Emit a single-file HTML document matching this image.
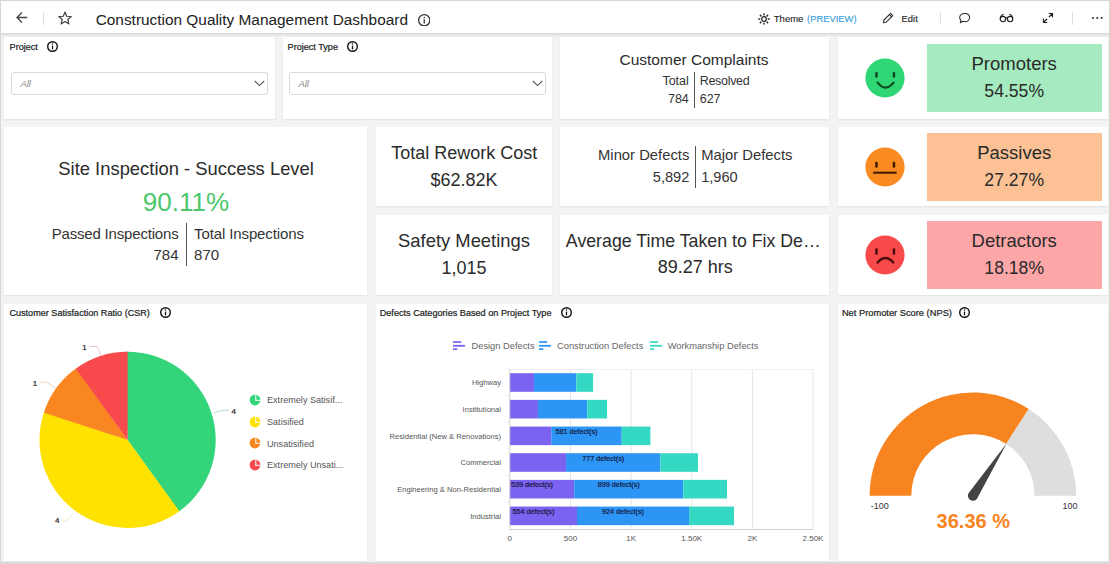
<!DOCTYPE html>
<html><head><meta charset="utf-8"><style>
html,body{margin:0;padding:0;}
body{width:1110px;height:564px;overflow:hidden;position:relative;background:#f3f3f3;font-family:"Liberation Sans",sans-serif;}
.a{position:absolute;}
.t{position:absolute;white-space:nowrap;line-height:1;}
.card{position:absolute;background:#fff;box-shadow:0 1px 1.5px rgba(0,0,0,0.07);}
.frame{position:absolute;left:0;top:0;width:1110px;height:564px;box-sizing:border-box;border-left:1.5px solid #d8d8d8;border-right:1.5px solid #d8d8d8;border-bottom:2px solid #d8d8d8;pointer-events:none;}
</style></head><body>
<div class="a" style="left:0;top:0;width:1110px;height:34px;background:#fff;border-top:1px solid #d6d6d6;border-bottom:1px solid #dadada;box-sizing:border-box;box-shadow:0 1px 3px rgba(0,0,0,0.10)"></div>
<svg class="a" style="left:15px;top:11px" width="14" height="13" viewBox="0 0 14 13"><path d="M2 6.5H12.2M7 1.5L2 6.5L7 11.5" fill="none" stroke="#444" stroke-width="1.3"/></svg>
<div class="a" style="left:43px;top:12px;width:1px;height:13px;background:#dcdcdc"></div>
<svg class="a" style="left:56px;top:10px" width="18" height="17" viewBox="0 0 18 17"><polygon points="9.00,2.00 10.70,6.25 15.28,6.56 11.76,9.50 12.88,13.94 9.00,11.50 5.12,13.94 6.24,9.50 2.72,6.56 7.30,6.25" fill="none" stroke="#444" stroke-width="1.2" stroke-linejoin="round"/></svg>
<div class="t" style="top:11.56px;left:95.70px;font-size:15.4px;color:#222;">Construction Quality Management Dashboard</div>
<svg class="a" style="left:417.55px;top:13.55px" width="12.5" height="12.5" viewBox="0 0 12.5 12.5"><circle cx="6.25" cy="6.25" r="5.60" fill="none" stroke="#333" stroke-width="1.3"/><rect x="5.60" y="5.25" width="1.3" height="4.25" fill="#333"/><circle cx="6.25" cy="3.50" r="0.75" fill="#333"/></svg>
<svg class="a" style="left:758.4px;top:13.3px" width="12" height="12" viewBox="0 0 12 12"><circle cx="6" cy="6" r="2.3" fill="none" stroke="#222" stroke-width="1.2"/><line x1="10.30" y1="6.00" x2="11.10" y2="6.00" stroke="#222" stroke-width="1.5" stroke-linecap="round"/><line x1="9.04" y1="9.04" x2="9.61" y2="9.61" stroke="#222" stroke-width="1.5" stroke-linecap="round"/><line x1="6.00" y1="10.30" x2="6.00" y2="11.10" stroke="#222" stroke-width="1.5" stroke-linecap="round"/><line x1="2.96" y1="9.04" x2="2.39" y2="9.61" stroke="#222" stroke-width="1.5" stroke-linecap="round"/><line x1="1.70" y1="6.00" x2="0.90" y2="6.00" stroke="#222" stroke-width="1.5" stroke-linecap="round"/><line x1="2.96" y1="2.96" x2="2.39" y2="2.39" stroke="#222" stroke-width="1.5" stroke-linecap="round"/><line x1="6.00" y1="1.70" x2="6.00" y2="0.90" stroke="#222" stroke-width="1.5" stroke-linecap="round"/><line x1="9.04" y1="2.96" x2="9.61" y2="2.39" stroke="#222" stroke-width="1.5" stroke-linecap="round"/></svg>
<div class="t" style="top:13.96px;left:773.80px;font-size:9.5px;color:#1a1a1a;-webkit-text-stroke:0.1px #1a1a1a;">Theme</div>
<div class="t" style="top:14.04px;left:807.10px;font-size:9.4px;color:#3aa0dc;-webkit-text-stroke:0.15px #3aa0dc;">(PREVIEW)</div>
<svg class="a" style="left:882px;top:12px" width="13" height="12" viewBox="0 0 13 12"><path d="M1.5 10.6L2 8L8.6 1.4L10.8 3.6L4.2 10.2Z M7.4 2.6L9.6 4.8" fill="none" stroke="#333" stroke-width="1.1" stroke-linejoin="round"/></svg>
<div class="t" style="top:14.04px;left:901.60px;font-size:9.4px;color:#1a1a1a;-webkit-text-stroke:0.1px #1a1a1a;">Edit</div>
<div class="a" style="left:940px;top:12px;width:1px;height:13px;background:#e0e0e0"></div>
<svg class="a" style="left:957.6px;top:11.6px" width="13.2" height="12.3" viewBox="0 0 15 14"><path d="M2.6 12.2L3.3 9.6C2.4 8.7 1.9 7.6 1.9 6.4C1.9 3.6 4.4 1.6 7.6 1.6C10.8 1.6 13.2 3.6 13.2 6.4C13.2 9.1 10.8 11.1 7.6 11.1C6.7 11.1 5.9 11 5.1 10.6Z" fill="none" stroke="#222" stroke-width="1.15" stroke-linejoin="round"/></svg>
<svg class="a" style="left:999px;top:12px" width="15" height="11" viewBox="0 0 15 11"><circle cx="3.9" cy="7" r="2.7" fill="none" stroke="#222" stroke-width="1.15"/><circle cx="11.1" cy="7" r="2.7" fill="none" stroke="#222" stroke-width="1.15"/><path d="M6.4 6.2Q7.5 5.4 8.6 6.2M1.3 6.4Q1.6 3.2 4.6 2.2M13.7 6.4Q13.4 3.2 10.4 2.2" fill="none" stroke="#222" stroke-width="1.15"/></svg>
<svg class="a" style="left:1042px;top:12px" width="12" height="12" viewBox="0 0 12 12"><path d="M1.5 10.5L5 7M7 5L10.5 1.5M6.8 1.5H10.5V5.2M1.5 6.8V10.5H5.2" fill="none" stroke="#222" stroke-width="1.2"/></svg>
<div class="a" style="left:1072px;top:12px;width:1px;height:13px;background:#e0e0e0"></div>
<svg class="a" style="left:1091px;top:16px" width="13" height="4" viewBox="0 0 13 4"><circle cx="2" cy="2" r="1.1" fill="#333"/><circle cx="6.3" cy="2" r="1.1" fill="#333"/><circle cx="10.6" cy="2" r="1.1" fill="#333"/></svg>
<div class="card" style="left:4px;top:37px;width:271px;height:82px"></div>
<div class="card" style="left:283px;top:37px;width:269px;height:82px"></div>
<div class="card" style="left:560px;top:37px;width:269px;height:82px"></div>
<div class="card" style="left:838px;top:37px;width:270px;height:82px"></div>
<div class="card" style="left:4px;top:127px;width:363px;height:168px"></div>
<div class="card" style="left:376px;top:127px;width:176px;height:79px"></div>
<div class="card" style="left:560px;top:127px;width:269px;height:79px"></div>
<div class="card" style="left:838px;top:127px;width:270px;height:79px"></div>
<div class="card" style="left:376px;top:215px;width:176px;height:80px"></div>
<div class="card" style="left:560px;top:215px;width:269px;height:80px"></div>
<div class="card" style="left:838px;top:215px;width:270px;height:80px"></div>
<div class="card" style="left:4px;top:304px;width:363px;height:257px"></div>
<div class="card" style="left:376px;top:304px;width:453px;height:257px"></div>
<div class="card" style="left:838px;top:304px;width:270px;height:257px"></div>
<div class="t" style="top:43.00px;left:9.60px;font-size:9.1px;color:#222;-webkit-text-stroke:0.22px #222;">Project</div>
<svg class="a" style="left:47.30px;top:41.40px" width="11" height="11" viewBox="0 0 11 11"><circle cx="5.5" cy="5.5" r="4.80" fill="none" stroke="#111" stroke-width="1.4"/><rect x="4.85" y="4.62" width="1.3" height="3.74" fill="#111"/><circle cx="5.5" cy="3.08" r="0.75" fill="#111"/></svg>
<div class="a" style="left:11px;top:72.4px;width:257px;height:23px;border:1px solid #d9d9d9;border-radius:3px;box-sizing:border-box;background:#fff"></div>
<div class="t" style="top:78.86px;left:20.40px;font-size:9.5px;color:#8a8a8a;font-style:italic;">All</div>
<svg class="a" style="left:253.5px;top:80px" width="11" height="7" viewBox="0 0 11 7"><path d="M0.8 1L5.5 5.6L10.2 1" fill="none" stroke="#555" stroke-width="1.05"/></svg>
<div class="t" style="top:43.00px;left:287.60px;font-size:9.1px;color:#222;-webkit-text-stroke:0.22px #222;">Project Type</div>
<svg class="a" style="left:346.50px;top:41.40px" width="11" height="11" viewBox="0 0 11 11"><circle cx="5.5" cy="5.5" r="4.80" fill="none" stroke="#111" stroke-width="1.4"/><rect x="4.85" y="4.62" width="1.3" height="3.74" fill="#111"/><circle cx="5.5" cy="3.08" r="0.75" fill="#111"/></svg>
<div class="a" style="left:289px;top:72.4px;width:257px;height:23px;border:1px solid #d9d9d9;border-radius:3px;box-sizing:border-box;background:#fff"></div>
<div class="t" style="top:78.86px;left:298.40px;font-size:9.5px;color:#8a8a8a;font-style:italic;">All</div>
<svg class="a" style="left:531.5px;top:80px" width="11" height="7" viewBox="0 0 11 7"><path d="M0.8 1L5.5 5.6L10.2 1" fill="none" stroke="#555" stroke-width="1.05"/></svg>
<div class="t" style="top:51.68px;left:694.00px;transform:translateX(-50%);font-size:15.5px;color:#2b2b2b;">Customer Complaints</div>
<div class="t" style="top:75.02px;right:421.20px;font-size:12.5px;color:#333;">Total</div>
<div class="t" style="top:75.02px;left:699.70px;font-size:12.5px;color:#333;letter-spacing:-0.3px;">Resolved</div>
<div class="t" style="top:93.02px;right:421.20px;font-size:12.5px;color:#333;">784</div>
<div class="t" style="top:93.02px;left:699.70px;font-size:12.5px;color:#333;">627</div>
<div class="a" style="left:694px;top:72.2px;width:1px;height:35.5px;background:#555"></div>
<div class="t" style="top:159.52px;left:186.10px;transform:translateX(-50%);font-size:18.4px;color:#2b2b2b;">Site Inspection - Success Level</div>
<div class="t" style="top:189.29px;left:185.90px;transform:translateX(-50%);font-size:26px;color:#4bc76c;">90.11%</div>
<div class="t" style="top:226.10px;right:931.50px;font-size:15px;color:#333;letter-spacing:-0.18px;">Passed Inspections</div>
<div class="t" style="top:226.10px;left:194.10px;font-size:15px;color:#333;letter-spacing:-0.12px;">Total Inspections</div>
<div class="t" style="top:247.00px;right:931.50px;font-size:15px;color:#333;">784</div>
<div class="t" style="top:247.00px;left:194.10px;font-size:15px;color:#333;">870</div>
<div class="a" style="left:186px;top:223px;width:1px;height:43px;background:#555"></div>
<div class="t" style="top:143.76px;left:464.30px;transform:translateX(-50%);font-size:18px;color:#2b2b2b;">Total Rework Cost</div>
<div class="t" style="top:170.76px;left:464.00px;transform:translateX(-50%);font-size:18px;color:#2b2b2b;">$62.82K</div>
<div class="t" style="top:231.72px;left:464.00px;transform:translateX(-50%);font-size:18.4px;color:#2b2b2b;">Safety Meetings</div>
<div class="t" style="top:258.96px;left:464.00px;transform:translateX(-50%);font-size:18px;color:#2b2b2b;">1,015</div>
<div class="t" style="top:147.87px;right:420.70px;font-size:14.8px;color:#333;">Minor Defects</div>
<div class="t" style="top:147.87px;left:701.20px;font-size:14.8px;color:#333;">Major Defects</div>
<div class="t" style="top:169.74px;right:420.70px;font-size:14.6px;color:#333;">5,892</div>
<div class="t" style="top:169.74px;left:701.20px;font-size:14.6px;color:#333;">1,960</div>
<div class="a" style="left:695px;top:145.6px;width:1px;height:42px;background:#555"></div>
<div class="t" style="top:232.97px;left:693.30px;transform:translateX(-50%);font-size:17.75px;color:#2b2b2b;">Average Time Taken to Fix De…</div>
<div class="t" style="top:257.86px;left:695.30px;transform:translateX(-50%);font-size:18px;color:#2b2b2b;">89.27 hrs</div>
<div class="a" style="left:927px;top:44px;width:175.4px;height:68.2px;background:#a6ebbf"></div>
<div class="t" style="top:55.14px;left:1014.20px;transform:translateX(-50%);font-size:18.5px;color:#2a2a2a;">Promoters</div>
<div class="t" style="top:83.00px;left:1014.20px;transform:translateX(-50%);font-size:17.6px;color:#2a2a2a;">54.55%</div>
<svg class="a" style="left:865px;top:58.40px" width="40" height="40" viewBox="0 0 40 40"><circle cx="20" cy="20" r="19.6" fill="#2ed674"/><rect x="10.2" y="13.8" width="2.5" height="6" rx="1.2" fill="#0d4a22"/><rect x="27.7" y="13.8" width="2.5" height="6" rx="1.2" fill="#0d4a22"/><path d="M12.7 24.6Q20.5 34.6 28.5 24.6" fill="none" stroke="#0d4a22" stroke-width="2.3" stroke-linecap="round"/></svg>
<div class="a" style="left:927px;top:132.8px;width:175.4px;height:68.0px;background:#fcc296"></div>
<div class="t" style="top:144.14px;left:1014.20px;transform:translateX(-50%);font-size:18.5px;color:#2a2a2a;">Passives</div>
<div class="t" style="top:171.90px;left:1014.20px;transform:translateX(-50%);font-size:17.6px;color:#2a2a2a;">27.27%</div>
<svg class="a" style="left:865px;top:147.10px" width="40" height="40" viewBox="0 0 40 40"><circle cx="20" cy="20" r="19.6" fill="#fa8a22"/><rect x="10.2" y="14.8" width="2.5" height="6" rx="1.2" fill="#3d1a00"/><rect x="27.7" y="14.8" width="2.5" height="6" rx="1.2" fill="#3d1a00"/><path d="M8.2 25.7H31.6" fill="none" stroke="#3d1a00" stroke-width="2"/></svg>
<div class="a" style="left:927px;top:220.5px;width:175.4px;height:68.7px;background:#fca6a8"></div>
<div class="t" style="top:232.14px;left:1014.20px;transform:translateX(-50%);font-size:18.5px;color:#2a2a2a;">Detractors</div>
<div class="t" style="top:259.70px;left:1014.20px;transform:translateX(-50%);font-size:17.6px;color:#2a2a2a;">18.18%</div>
<svg class="a" style="left:865px;top:235.15px" width="40" height="40" viewBox="0 0 40 40"><circle cx="20" cy="20" r="19.6" fill="#f84a4b"/><rect x="10.2" y="13.2" width="2.5" height="6.6" rx="1.2" fill="#4a0c0c"/><rect x="27.7" y="13.2" width="2.5" height="6.6" rx="1.2" fill="#4a0c0c"/><path d="M12.6 27.6Q20.4 18.4 28.3 27.6" fill="none" stroke="#4a0c0c" stroke-width="2.3" stroke-linecap="round"/></svg>
<div class="t" style="top:308.80px;left:9.40px;font-size:9.1px;color:#222;-webkit-text-stroke:0.22px #222;">Customer Satisfaction Ratio (CSR)</div>
<svg class="a" style="left:159.90px;top:306.80px" width="11" height="11" viewBox="0 0 11 11"><circle cx="5.5" cy="5.5" r="4.80" fill="none" stroke="#111" stroke-width="1.4"/><rect x="4.85" y="4.62" width="1.3" height="3.74" fill="#111"/><circle cx="5.5" cy="3.08" r="0.75" fill="#111"/></svg>
<svg class="a" style="left:0;top:0" width="1110" height="564" viewBox="0 0 1110 564"><path d="M127.6,439.9 L124.53,351.85 A88.1,88.1 0 0 1 179.01,511.44 Z" fill="#34d57a"/><path d="M127.6,439.9 L179.38,511.17 A88.1,88.1 0 0 1 43.96,412.24 Z" fill="#ffe200"/><path d="M127.6,439.9 L43.81,412.68 A88.1,88.1 0 0 1 76.19,368.36 Z" fill="#f98620"/><path d="M127.6,439.9 L75.82,368.63 A88.1,88.1 0 0 1 127.60,351.80 Z" fill="#f84a4d"/><polyline points="213.8,413 221.5,410.4 229,410.4" fill="none" stroke="#9fd8c4" stroke-width="0.8"/><polyline points="89.5,346.5 97,346.5 101,355.5" fill="none" stroke="#ecb4b4" stroke-width="0.8"/><polyline points="38.8,382.2 46.9,382.2 56,388.3" fill="none" stroke="#ecc6b0" stroke-width="0.8"/><polyline points="61,520.2 67,520.2 72.5,513.5" fill="none" stroke="#efe6b8" stroke-width="0.8"/></svg>
<div class="t" style="top:343.83px;left:84.50px;transform:translateX(-50%);font-size:8px;color:#222;-webkit-text-stroke:0.22px #222;">1</div>
<div class="t" style="top:380.03px;left:35.00px;transform:translateX(-50%);font-size:8px;color:#222;-webkit-text-stroke:0.22px #222;">1</div>
<div class="t" style="top:407.63px;left:233.80px;transform:translateX(-50%);font-size:8px;color:#222;-webkit-text-stroke:0.22px #222;">4</div>
<div class="t" style="top:517.23px;left:57.20px;transform:translateX(-50%);font-size:8px;color:#222;-webkit-text-stroke:0.22px #222;">4</div>
<svg class="a" style="left:248.6px;top:394.10px" width="12" height="12" viewBox="0 0 12 12"><circle cx="6" cy="6" r="5.4" fill="#34d57a"/><path d="M6.8 6.3V0M6.3 6.3H12" stroke="#fff" stroke-width="1"/></svg>
<div class="t" style="top:396.30px;left:267.00px;font-size:9.1px;color:#555;">Extremely Satisif...</div>
<svg class="a" style="left:248.6px;top:415.90px" width="12" height="12" viewBox="0 0 12 12"><circle cx="6" cy="6" r="5.4" fill="#ffe200"/><path d="M6.8 6.3V0M6.3 6.3H12" stroke="#fff" stroke-width="1"/></svg>
<div class="t" style="top:418.10px;left:267.00px;font-size:9.1px;color:#555;">Satisified</div>
<svg class="a" style="left:248.6px;top:437.40px" width="12" height="12" viewBox="0 0 12 12"><circle cx="6" cy="6" r="5.4" fill="#f98620"/><path d="M6.8 6.3V0M6.3 6.3H12" stroke="#fff" stroke-width="1"/></svg>
<div class="t" style="top:439.60px;left:267.00px;font-size:9.1px;color:#555;">Unsatisified</div>
<svg class="a" style="left:248.6px;top:458.50px" width="12" height="12" viewBox="0 0 12 12"><circle cx="6" cy="6" r="5.4" fill="#f84a4d"/><path d="M6.8 6.3V0M6.3 6.3H12" stroke="#fff" stroke-width="1"/></svg>
<div class="t" style="top:460.70px;left:267.00px;font-size:9.1px;color:#555;">Extremely Unsati...</div>
<div class="t" style="top:308.65px;left:379.70px;font-size:9.15px;color:#222;-webkit-text-stroke:0.22px #222;">Defects Categories Based on Project Type</div>
<svg class="a" style="left:561.10px;top:306.80px" width="11" height="11" viewBox="0 0 11 11"><circle cx="5.5" cy="5.5" r="4.80" fill="none" stroke="#111" stroke-width="1.4"/><rect x="4.85" y="4.62" width="1.3" height="3.74" fill="#111"/><circle cx="5.5" cy="3.08" r="0.75" fill="#111"/></svg>
<svg class="a" style="left:453.4px;top:341px" width="13" height="10" viewBox="0 0 13 10"><rect x="0" y="0.2" width="8.2" height="1.7" fill="#7b62f1"/><rect x="0" y="3.9" width="11.9" height="1.8" fill="#7b62f1"/><rect x="0" y="7.3" width="4.3" height="1.7" fill="#7b62f1"/></svg>
<div class="t" style="top:342.03px;left:471.50px;font-size:9.3px;color:#666;">Design Defects</div>
<svg class="a" style="left:539.4px;top:341px" width="13" height="10" viewBox="0 0 13 10"><rect x="0" y="0.2" width="8.2" height="1.7" fill="#2c95f5"/><rect x="0" y="3.9" width="11.9" height="1.8" fill="#2c95f5"/><rect x="0" y="7.3" width="4.3" height="1.7" fill="#2c95f5"/></svg>
<div class="t" style="top:342.03px;left:557.00px;font-size:9.3px;color:#666;">Construction Defects</div>
<svg class="a" style="left:650px;top:341px" width="13" height="10" viewBox="0 0 13 10"><rect x="0" y="0.2" width="8.2" height="1.7" fill="#35d8c2"/><rect x="0" y="3.9" width="11.9" height="1.8" fill="#35d8c2"/><rect x="0" y="7.3" width="4.3" height="1.7" fill="#35d8c2"/></svg>
<div class="t" style="top:342.03px;left:667.70px;font-size:9.3px;color:#666;">Workmanship Defects</div>
<svg class="a" style="left:0;top:0" width="1110" height="564" viewBox="0 0 1110 564"><line x1="570.44" y1="369" x2="570.44" y2="529.5" stroke="#e6e6e6" stroke-width="1"/><line x1="631.08" y1="369" x2="631.08" y2="529.5" stroke="#e6e6e6" stroke-width="1"/><line x1="691.72" y1="369" x2="691.72" y2="529.5" stroke="#e6e6e6" stroke-width="1"/><line x1="752.36" y1="369" x2="752.36" y2="529.5" stroke="#e6e6e6" stroke-width="1"/><line x1="813.00" y1="369" x2="813.00" y2="529.5" stroke="#e6e6e6" stroke-width="1"/><line x1="509.8" y1="369.5" x2="813" y2="369.5" stroke="#f0f0f0" stroke-width="1"/><rect x="509.80" y="373.20" width="24.26" height="18.6" fill="#7b62f1"/><rect x="534.06" y="373.20" width="42.33" height="18.6" fill="#2c95f5"/><rect x="576.38" y="373.20" width="16.74" height="18.6" fill="#35d8c2"/><line x1="505.8" y1="369.00" x2="509.8" y2="369.00" stroke="#eee" stroke-width="1"/><rect x="509.80" y="399.87" width="28.14" height="18.6" fill="#7b62f1"/><rect x="537.94" y="399.87" width="49.24" height="18.6" fill="#2c95f5"/><rect x="587.18" y="399.87" width="19.89" height="18.6" fill="#35d8c2"/><line x1="505.8" y1="395.67" x2="509.8" y2="395.67" stroke="#eee" stroke-width="1"/><rect x="509.80" y="426.54" width="41.48" height="18.6" fill="#7b62f1"/><rect x="551.28" y="426.54" width="70.46" height="18.6" fill="#2c95f5"/><rect x="621.74" y="426.54" width="28.62" height="18.6" fill="#35d8c2"/><line x1="505.8" y1="422.34" x2="509.8" y2="422.34" stroke="#eee" stroke-width="1"/><rect x="509.80" y="453.21" width="56.27" height="18.6" fill="#7b62f1"/><rect x="566.07" y="453.21" width="94.23" height="18.6" fill="#2c95f5"/><rect x="660.31" y="453.21" width="37.72" height="18.6" fill="#35d8c2"/><line x1="505.8" y1="449.01" x2="509.8" y2="449.01" stroke="#eee" stroke-width="1"/><rect x="509.80" y="479.88" width="64.40" height="18.6" fill="#7b62f1"/><rect x="574.20" y="479.88" width="109.03" height="18.6" fill="#2c95f5"/><rect x="683.23" y="479.88" width="43.78" height="18.6" fill="#35d8c2"/><line x1="505.8" y1="475.68" x2="509.8" y2="475.68" stroke="#eee" stroke-width="1"/><rect x="509.80" y="506.55" width="67.19" height="18.6" fill="#7b62f1"/><rect x="576.99" y="506.55" width="112.06" height="18.6" fill="#2c95f5"/><rect x="689.05" y="506.55" width="44.99" height="18.6" fill="#35d8c2"/><line x1="505.8" y1="502.35" x2="509.8" y2="502.35" stroke="#eee" stroke-width="1"/><line x1="509.8" y1="369" x2="509.8" y2="530" stroke="#d0d0d0" stroke-width="1"/><line x1="509.8" y1="529.5" x2="813.5" y2="529.5" stroke="#d0d0d0" stroke-width="1"/></svg>
<div class="t" style="top:427.95px;left:576.51px;transform:translateX(-50%);font-size:7.2px;color:#14183a;-webkit-text-stroke:0.2px #14183a;">581 defect(s)</div>
<div class="t" style="top:454.62px;left:603.19px;transform:translateX(-50%);font-size:7.2px;color:#14183a;-webkit-text-stroke:0.2px #14183a;">777 defect(s)</div>
<div class="t" style="top:481.29px;left:618.72px;transform:translateX(-50%);font-size:7.2px;color:#14183a;-webkit-text-stroke:0.2px #14183a;">899 defect(s)</div>
<div class="t" style="top:481.29px;left:532.00px;transform:translateX(-50%);font-size:7.2px;color:#14183a;-webkit-text-stroke:0.2px #14183a;">539 defect(s)</div>
<div class="t" style="top:507.96px;left:623.02px;transform:translateX(-50%);font-size:7.2px;color:#14183a;-webkit-text-stroke:0.2px #14183a;">924 defect(s)</div>
<div class="t" style="top:507.96px;left:533.39px;transform:translateX(-50%);font-size:7.2px;color:#14183a;-webkit-text-stroke:0.2px #14183a;">554 defect(s)</div>
<div class="t" style="top:379.47px;right:609.00px;font-size:7.6px;color:#555;">Highway</div>
<div class="t" style="top:406.14px;right:609.00px;font-size:7.6px;color:#555;">Institutional</div>
<div class="t" style="top:432.81px;right:609.00px;font-size:7.6px;color:#555;">Residential (New &amp; Renovations)</div>
<div class="t" style="top:459.48px;right:609.00px;font-size:7.6px;color:#555;">Commercial</div>
<div class="t" style="top:486.15px;right:609.00px;font-size:7.6px;color:#555;">Engineering &amp; Non-Residential</div>
<div class="t" style="top:512.82px;right:609.00px;font-size:7.6px;color:#555;">Industrial</div>
<div class="t" style="top:534.83px;left:509.80px;transform:translateX(-50%);font-size:8px;color:#555;">0</div>
<div class="t" style="top:534.83px;left:570.44px;transform:translateX(-50%);font-size:8px;color:#555;">500</div>
<div class="t" style="top:534.83px;left:631.08px;transform:translateX(-50%);font-size:8px;color:#555;">1K</div>
<div class="t" style="top:534.83px;left:691.72px;transform:translateX(-50%);font-size:8px;color:#555;">1.50K</div>
<div class="t" style="top:534.83px;left:752.36px;transform:translateX(-50%);font-size:8px;color:#555;">2K</div>
<div class="t" style="top:534.83px;left:813.00px;transform:translateX(-50%);font-size:8px;color:#555;">2.50K</div>
<div class="t" style="top:308.63px;left:841.90px;font-size:9.3px;color:#222;-webkit-text-stroke:0.22px #222;">Net Promoter Score (NPS)</div>
<svg class="a" style="left:959.10px;top:306.80px" width="11" height="11" viewBox="0 0 11 11"><circle cx="5.5" cy="5.5" r="4.80" fill="none" stroke="#111" stroke-width="1.4"/><rect x="4.85" y="4.62" width="1.3" height="3.74" fill="#111"/><circle cx="5.5" cy="3.08" r="0.75" fill="#111"/></svg>
<svg class="a" style="left:0;top:0" width="1110" height="564" viewBox="0 0 1110 564"><path d="M869.60,495.80 A103.3,103.3 0 0 1 1028.74,408.90 L1006.20,443.98 A61.6,61.6 0 0 0 911.30,495.80 Z" fill="#f7841f"/><path d="M1028.74,408.90 A103.3,103.3 0 0 1 1076.20,495.80 L1034.50,495.80 A61.6,61.6 0 0 0 1006.20,443.98 Z" fill="#dedede"/><path d="M968.69,493.10 L1006.74,443.14 L977.11,498.50 A5,5 0 0 1 968.69,493.10 Z" fill="#444"/></svg>
<div class="t" style="top:502.18px;left:879.80px;transform:translateX(-50%);font-size:9px;color:#333;">-100</div>
<div class="t" style="top:502.18px;left:1069.90px;transform:translateX(-50%);font-size:9px;color:#333;">100</div>
<div class="t" style="top:511.37px;left:973.30px;transform:translateX(-50%);font-size:20px;color:#f7841f;font-weight:bold;">36.36 %</div>
<div class="frame"></div>
</body></html>
